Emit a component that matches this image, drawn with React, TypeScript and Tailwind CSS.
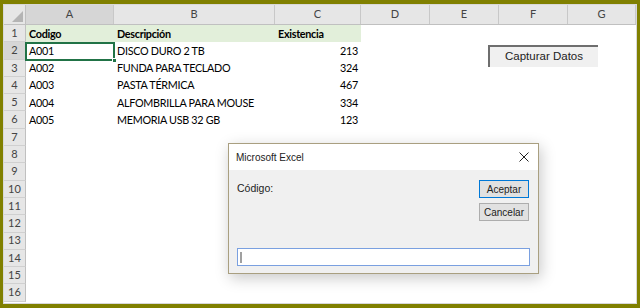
import React from 'react';

const cols = [
    { key: 'A', w: 'w-[88px]' },
    { key: 'B', w: 'w-[161px]' },
    { key: 'C', w: 'w-[86px]' },
    { key: 'D', w: 'w-[69px]' },
    { key: 'E', w: 'w-[69px]' },
    { key: 'F', w: 'w-[69px]' },
    { key: 'G', w: 'flex-1' },
];

const data = [
    ['A001', 'DISCO DURO 2 TB', '213'],
    ['A002', 'FUNDA PARA TECLADO', '324'],
    ['A003', 'PASTA TÉRMICA', '467'],
    ['A004', 'ALFOMBRILLA PARA MOUSE', '334'],
    ['A005', 'MEMORIA USB 32 GB', '123'],
];

const rows = Array.from({ length: 16 }, (_, i) => i + 1);

// gridlines are turned off in this sheet, so cells have no borders
const Cell: React.FC<{ w: string; className?: string; children?: React.ReactNode }> = ({ w, className = '', children }) => (
    <div className={`${w} shrink-0 h-full px-[3px] flex items-center overflow-visible whitespace-nowrap ${className}`}>
        {children}
    </div>
);

const Sheet: React.FC = () => {
    return (
        <div className="relative flex flex-col h-full bg-white font-['Lato',sans-serif] text-[10.8px] tracking-[-0.3px] text-black">
            {/* column headers */}
            <div className="flex h-[20px] shrink-0 bg-[#e6e6e6] border-b border-[#c0c0c0] text-[#444] tracking-normal text-[11px]">
                <div className="w-[22px] shrink-0 border-r border-[#c0c0c0] relative">
                    <svg className="absolute right-[2px] bottom-[2px]" width="11" height="11" viewBox="0 0 11 11">
                        <polygon points="11,0 11,11 0,11" fill="#b4b4b4" />
                    </svg>
                </div>
                {cols.map((c) => (
                    <div
                        key={c.key}
                        className={`${c.w} shrink-0 border-r border-[#c8c8c8] flex items-center justify-center ${c.key === 'A' ? 'bg-[#d6d6d6]' : ''}`}
                    >
                        {c.key}
                    </div>
                ))}
            </div>

            {rows.map((r) => {
                const d = r >= 2 && r <= 6 ? data[r - 2] : null;
                return (
                    <div key={r} className="flex h-[17.3px] shrink-0">
                        <div className={`w-[22px] shrink-0 h-full border-r border-b border-r-[#c0c0c0] border-b-[#d0d0d0] flex items-center justify-center text-[#444] text-[11px] tracking-normal ${r === 2 ? 'bg-[#d6d6d6]' : 'bg-[#e6e6e6]'}`}>
                            {r}
                        </div>
                        {r === 1 ? (
                            <>
                                <Cell w="w-[88px]" className="bg-[#e2efda] font-bold">Codigo</Cell>
                                <Cell w="w-[161px]" className="bg-[#e2efda] font-bold">Descripción</Cell>
                                <Cell w="w-[86px]" className="bg-[#e2efda] font-bold">Existencia</Cell>
                            </>
                        ) : (
                            <>
                                <Cell w="w-[88px]">{d?.[0]}</Cell>
                                <Cell w="w-[161px]">{d?.[1]}</Cell>
                                <Cell w="w-[86px]" className="justify-end">{d?.[2]}</Cell>
                            </>
                        )}
                        <div className="flex-1" />
                    </div>
                );
            })}

            {/* active cell A2 */}
            <div className="absolute left-[21px] top-[37px] w-[90px] h-[19px] border-2 border-[#217346]">
                <div className="absolute -right-[4px] -bottom-[4px] w-[5px] h-[5px] bg-[#217346] border border-white" />
            </div>

            {/* form button */}
            <div className="absolute left-[484px] top-[40px] w-[110px] h-[22px] bg-[#f0f0f0] border-l-2 border-t-2 border-l-[#6e6e6e] border-t-[#6e6e6e] flex items-center justify-center font-['Liberation_Sans',sans-serif] text-[11.5px] tracking-normal text-[#222]">
                Capturar Datos
            </div>

            {/* input box dialog */}
            <div className="absolute left-[224px] top-[138px] w-[311px] h-[131px] flex flex-col bg-[#f0f0f0] border border-[#a99f80] shadow-[2px_4px_14px_rgba(0,0,0,0.22)] font-['Liberation_Sans',sans-serif] text-[10px] tracking-normal text-[#222]">
                <div className="h-[26px] shrink-0 bg-white flex items-center justify-between pl-[7px] pr-[9px]">
                    <span>Microsoft Excel</span>
                    <svg width="10" height="10" viewBox="0 0 10 10">
                        <path d="M0.5 0.5 L9.5 9.5 M9.5 0.5 L0.5 9.5" stroke="#222" strokeWidth="1" />
                    </svg>
                </div>
                <div className="flex-1 flex flex-col px-[8px] pt-[10px] pb-[7px]">
                    <div className="flex justify-between">
                        <span className="text-[10.5px] mt-[1px]">Código:</span>
                        <div className="flex flex-col gap-[5px] mr-[1px]">
                            <div className="w-[50px] h-[18px] bg-[#e1e1e1] border border-[#0078d7] flex items-center justify-center">Aceptar</div>
                            <div className="w-[50px] h-[18px] bg-[#e1e1e1] border border-[#adadad] flex items-center justify-center">Cancelar</div>
                        </div>
                    </div>
                    <div className="mt-auto h-[18px] bg-white border border-[#7aa0e0] flex items-center pl-[2px]">
                        <div className="w-[2px] h-[11px] bg-[#a0a0a0]" />
                    </div>
                </div>
            </div>
        </div>
    );
};

const App: React.FC = () => {
    return (
        <div className="w-[640px] h-[308px] bg-[#808000] pt-[4px] pl-[3px] pr-[3px] pb-[4px]">
            <div className="h-full border border-[#d8d8d8] overflow-hidden">
                <Sheet />
            </div>
        </div>
    );
};

export default App;
